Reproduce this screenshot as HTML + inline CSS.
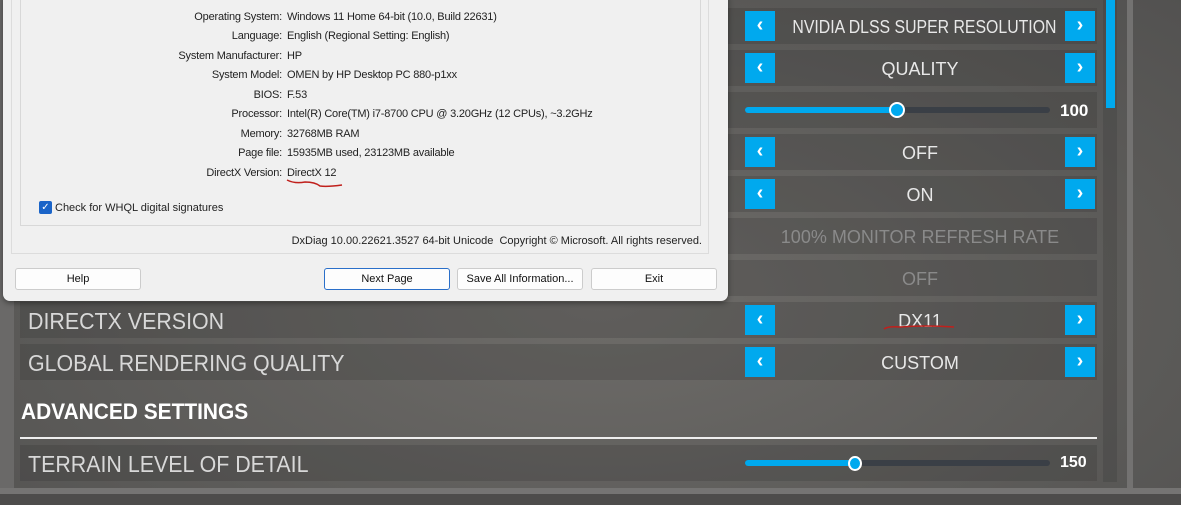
<!DOCTYPE html><html><head><style>
body{margin:0;width:1181px;height:505px;overflow:hidden;position:relative;background:radial-gradient(ellipse at 600px 300px,#6e6c69,#5a5957 70%,#525150);font-family:"Liberation Sans",sans-serif}
.a{position:absolute}
.row{position:absolute;left:20px;width:1077px;height:36px;background:rgba(40,40,40,0.2)}
.lbl{position:absolute;left:8px;top:6px;font-size:23px;color:#d8d8d8;transform:scaleX(0.93);transform-origin:left;white-space:nowrap}
.b{position:absolute;top:3px;width:30px;height:30px;background:#00a9ee;color:#fff;font-size:20px;font-weight:bold;text-align:center;line-height:29px;z-index:2}
.v{position:absolute;left:755px;width:290px;top:9px;text-align:center;color:#e8e8e8;font-size:18px;white-space:nowrap}
.dl{position:absolute;right:899px;font-size:11px;color:#222;text-align:right;white-space:nowrap;letter-spacing:-0.2px}
.dv{position:absolute;left:287px;font-size:11px;color:#222;white-space:nowrap;letter-spacing:-0.2px}
.btn{position:absolute;top:268px;height:20px;width:124px;background:#fdfdfd;border:1px solid #ccc;border-radius:3px;font-size:11px;text-align:center;line-height:20px;color:#111}
</style></head><body>
<div class="a" style="left:1103px;top:0;width:14px;height:482px;background:rgba(0,0,0,0.1)"></div>
<div class="a" style="left:1106px;top:0;width:9px;height:108px;background:#00a9ee"></div>
<div class="a" style="left:1127px;top:0;width:6px;height:493px;background:#737271"></div>
<div class="a" style="left:0;top:488px;width:1181px;height:6px;background:#757473"></div>
<div class="a" style="left:0;top:494px;width:1181px;height:11px;background:#4d4c4b"></div>
<div class="a" style="left:0;top:0;width:14px;height:488px;background:#6a6968"></div>

<div class="row" style="top:8px"><div class="b" style="left:725px">&lsaquo;</div><div class="v" style="transform:scaleX(0.88)">NVIDIA DLSS SUPER RESOLUTION</div><div class="b" style="left:1045px">&rsaquo;</div></div>
<div class="row" style="top:50px"><div class="b" style="left:725px">&lsaquo;</div><div class="v">QUALITY</div><div class="b" style="left:1045px">&rsaquo;</div></div>
<div class="row" style="top:92px"><div class="a" style="left:725px;top:15px;width:305px;height:6px;background:#3a3f46;border-radius:3px"></div><div class="a" style="left:725px;top:15px;width:152px;height:6px;background:#00a9ee;border-radius:3px"></div><div class="a" style="left:869px;top:10px;width:12px;height:12px;border-radius:50%;background:#00a9ee;border:2px solid #fff"></div><div class="a" style="left:1040px;top:9px;color:#fff;font-weight:bold;font-size:17px">100</div></div>
<div class="row" style="top:134px"><div class="b" style="left:725px">&lsaquo;</div><div class="v">OFF</div><div class="b" style="left:1045px">&rsaquo;</div></div>
<div class="row" style="top:176px"><div class="b" style="left:725px">&lsaquo;</div><div class="v">ON</div><div class="b" style="left:1045px">&rsaquo;</div></div>
<div class="row" style="top:218px"><div class="v" style="color:#8a8a8a">100% MONITOR REFRESH RATE</div></div>
<div class="row" style="top:260px"><div class="v" style="color:#8a8a8a">OFF</div></div>
<div class="row" style="top:302px"><div class="lbl">DIRECTX VERSION</div><div class="b" style="left:725px">&lsaquo;</div><div class="v">DX11</div><div class="b" style="left:1045px">&rsaquo;</div>
<svg class="a" style="left:860px;top:20px" width="80" height="12"><path d="M4 7 Q8 4 20 5 Q45 3 74 5" stroke="#c0201c" stroke-width="1.5" fill="none"/></svg></div>
<div class="row" style="top:344px"><div class="lbl">GLOBAL RENDERING QUALITY</div><div class="b" style="left:725px">&lsaquo;</div><div class="v">CUSTOM</div><div class="b" style="left:1045px">&rsaquo;</div></div>
<div class="a" style="left:21px;top:399px;font-size:22px;font-weight:bold;color:#fff;transform:scaleX(0.95);transform-origin:left">ADVANCED SETTINGS</div>
<div class="a" style="left:20px;top:437px;width:1077px;height:2px;background:#eee"></div>
<div class="row" style="top:445px"><div class="lbl">TERRAIN LEVEL OF DETAIL</div><div class="a" style="left:725px;top:15px;width:305px;height:6px;background:#3a3f46;border-radius:3px"></div><div class="a" style="left:725px;top:15px;width:110px;height:6px;background:#00a9ee;border-radius:3px"></div><div class="a" style="left:828px;top:11px;width:10px;height:11px;border-radius:50%;background:#00a9ee;border:2px solid #fff"></div><div class="a" style="left:1040px;top:9px;color:#fff;font-weight:bold;font-size:16px">150</div></div>

<div class="a" style="left:3px;top:-5px;width:725px;height:306px;background:#f0f0f0;border-radius:0 0 7px 7px;box-shadow:0 2px 6px rgba(0,0,0,0.4)">
<div class="a" style="left:8px;top:0;width:696px;height:258px;border:1px solid #dcdcdc;border-top:none"></div>
<div class="a" style="left:17px;top:0;width:679px;height:230px;border:1px solid #d8d8d8;border-top:none"></div>
</div>
<div class="dl" style="top:11px">Operating System:</div><div class="dv" style="top:11px">Windows 11 Home 64-bit (10.0, Build 22631)</div>
<div class="dl" style="top:30px">Language:</div><div class="dv" style="top:30px">English (Regional Setting: English)</div>
<div class="dl" style="top:50px">System Manufacturer:</div><div class="dv" style="top:50px">HP</div>
<div class="dl" style="top:69px">System Model:</div><div class="dv" style="top:69px">OMEN by HP Desktop PC 880-p1xx</div>
<div class="dl" style="top:89px">BIOS:</div><div class="dv" style="top:89px">F.53</div>
<div class="dl" style="top:108px">Processor:</div><div class="dv" style="top:108px">Intel(R) Core(TM) i7-8700 CPU @ 3.20GHz (12 CPUs), ~3.2GHz</div>
<div class="dl" style="top:128px">Memory:</div><div class="dv" style="top:128px">32768MB RAM</div>
<div class="dl" style="top:147px">Page file:</div><div class="dv" style="top:147px">15935MB used, 23123MB available</div>
<div class="dl" style="top:167px">DirectX Version:</div><div class="dv" style="top:167px">DirectX 12</div>
<svg class="a" style="left:285px;top:177px" width="60" height="12"><path d="M2 3 Q10 7 20 5 Q30 5 35 9 Q42 10 57 8" stroke="#c0201c" stroke-width="1.5" fill="none"/></svg>
<div class="a" style="left:39px;top:201px;width:13px;height:13px;background:#1a64c8;border-radius:2px;color:#fff;font-size:10px;line-height:13px;text-align:center">✓</div>
<div class="a" style="left:55px;top:202px;font-size:11px;color:#222">Check for WHQL digital signatures</div>
<div class="a" style="right:479px;top:235px;font-size:11px;color:#222;white-space:nowrap">DxDiag 10.00.22621.3527 64-bit Unicode &nbsp;Copyright © Microsoft. All rights reserved.</div>
<div class="btn" style="left:15px">Help</div>
<div class="btn" style="left:324px;border-color:#2a6fc9">Next Page</div>
<div class="btn" style="left:457px">Save All Information...</div>
<div class="btn" style="left:591px">Exit</div>
</body></html>
